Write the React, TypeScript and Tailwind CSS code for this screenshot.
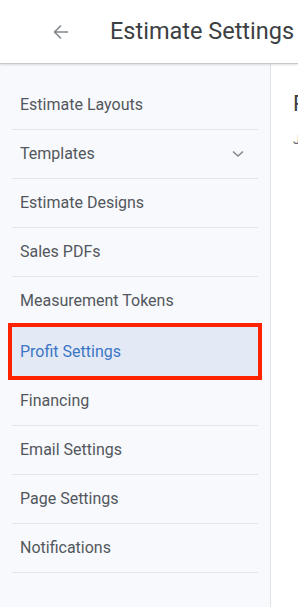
import React from 'react';

const items = [
  'Estimate Layouts',
  'Templates',
  'Estimate Designs',
  'Sales PDFs',
  'Measurement Tokens',
  'Profit Settings',
  'Financing',
  'Email Settings',
  'Page Settings',
  'Notifications',
];

const active = 'Profit Settings';

export default function App() {
  return (
    <div className="w-[298px] h-[607px] overflow-hidden bg-white font-['Roboto',sans-serif]">
      <header className="h-[64px] flex items-center border-b border-[#c4c7cc] shadow-[0_1px_2px_rgba(0,0,0,0.12)] relative z-10 whitespace-nowrap">
        <button className="ml-[52px] w-[18px] h-[18px] flex items-center justify-center text-[#80868b]">
          <svg width="16" height="16" viewBox="0 0 16 16" fill="none" stroke="currentColor" strokeWidth="1.5">
            <path d="M15 8H1.5M8 1.5L1.5 8L8 14.5" />
          </svg>
        </button>
        <h1 className="ml-[40px] text-[23.5px] text-[#3c4043]">Estimate Settings</h1>
      </header>
      <div className="flex h-[543px]">
        <nav className="w-[271px] shrink-0 bg-[#f8f9fc] border-r border-[#e1e3e6] pt-[17px]">
          {items.map((label) => {
            const isActive = label === active;
            if (isActive) {
              return (
                <div key={label} className="mx-2 -my-[3px] border-4 border-[#ff2200] bg-[#e4eaf5] h-[57px] flex items-center pl-[8px] relative">
                  <span className="text-[16px] text-[#3b76c5]">{label}</span>
                </div>
              );
            }
            return (
              <div key={label} className="mx-3 h-[49px] flex items-center justify-between border-b border-[#e3e5e8] pl-2 pr-[14px]">
                <span className="text-[16px] text-[#52575d]">{label}</span>
                {label === 'Templates' && (
                  <svg width="12" height="8" viewBox="0 0 12 8" fill="none" stroke="#80868b" strokeWidth="1.5">
                    <path d="M1 1.5L6 6L11 1.5" />
                  </svg>
                )}
              </div>
            );
          })}
        </nav>
        <main className="flex-1 pl-[22px] pt-[23px] whitespace-nowrap overflow-hidden">
          <div className="text-[22px] text-[#3c4043]">Profit</div>
          <div className="mt-[10px] text-[13px] text-[#5f6368]">Jobs</div>
        </main>
      </div>
    </div>
  );
}
